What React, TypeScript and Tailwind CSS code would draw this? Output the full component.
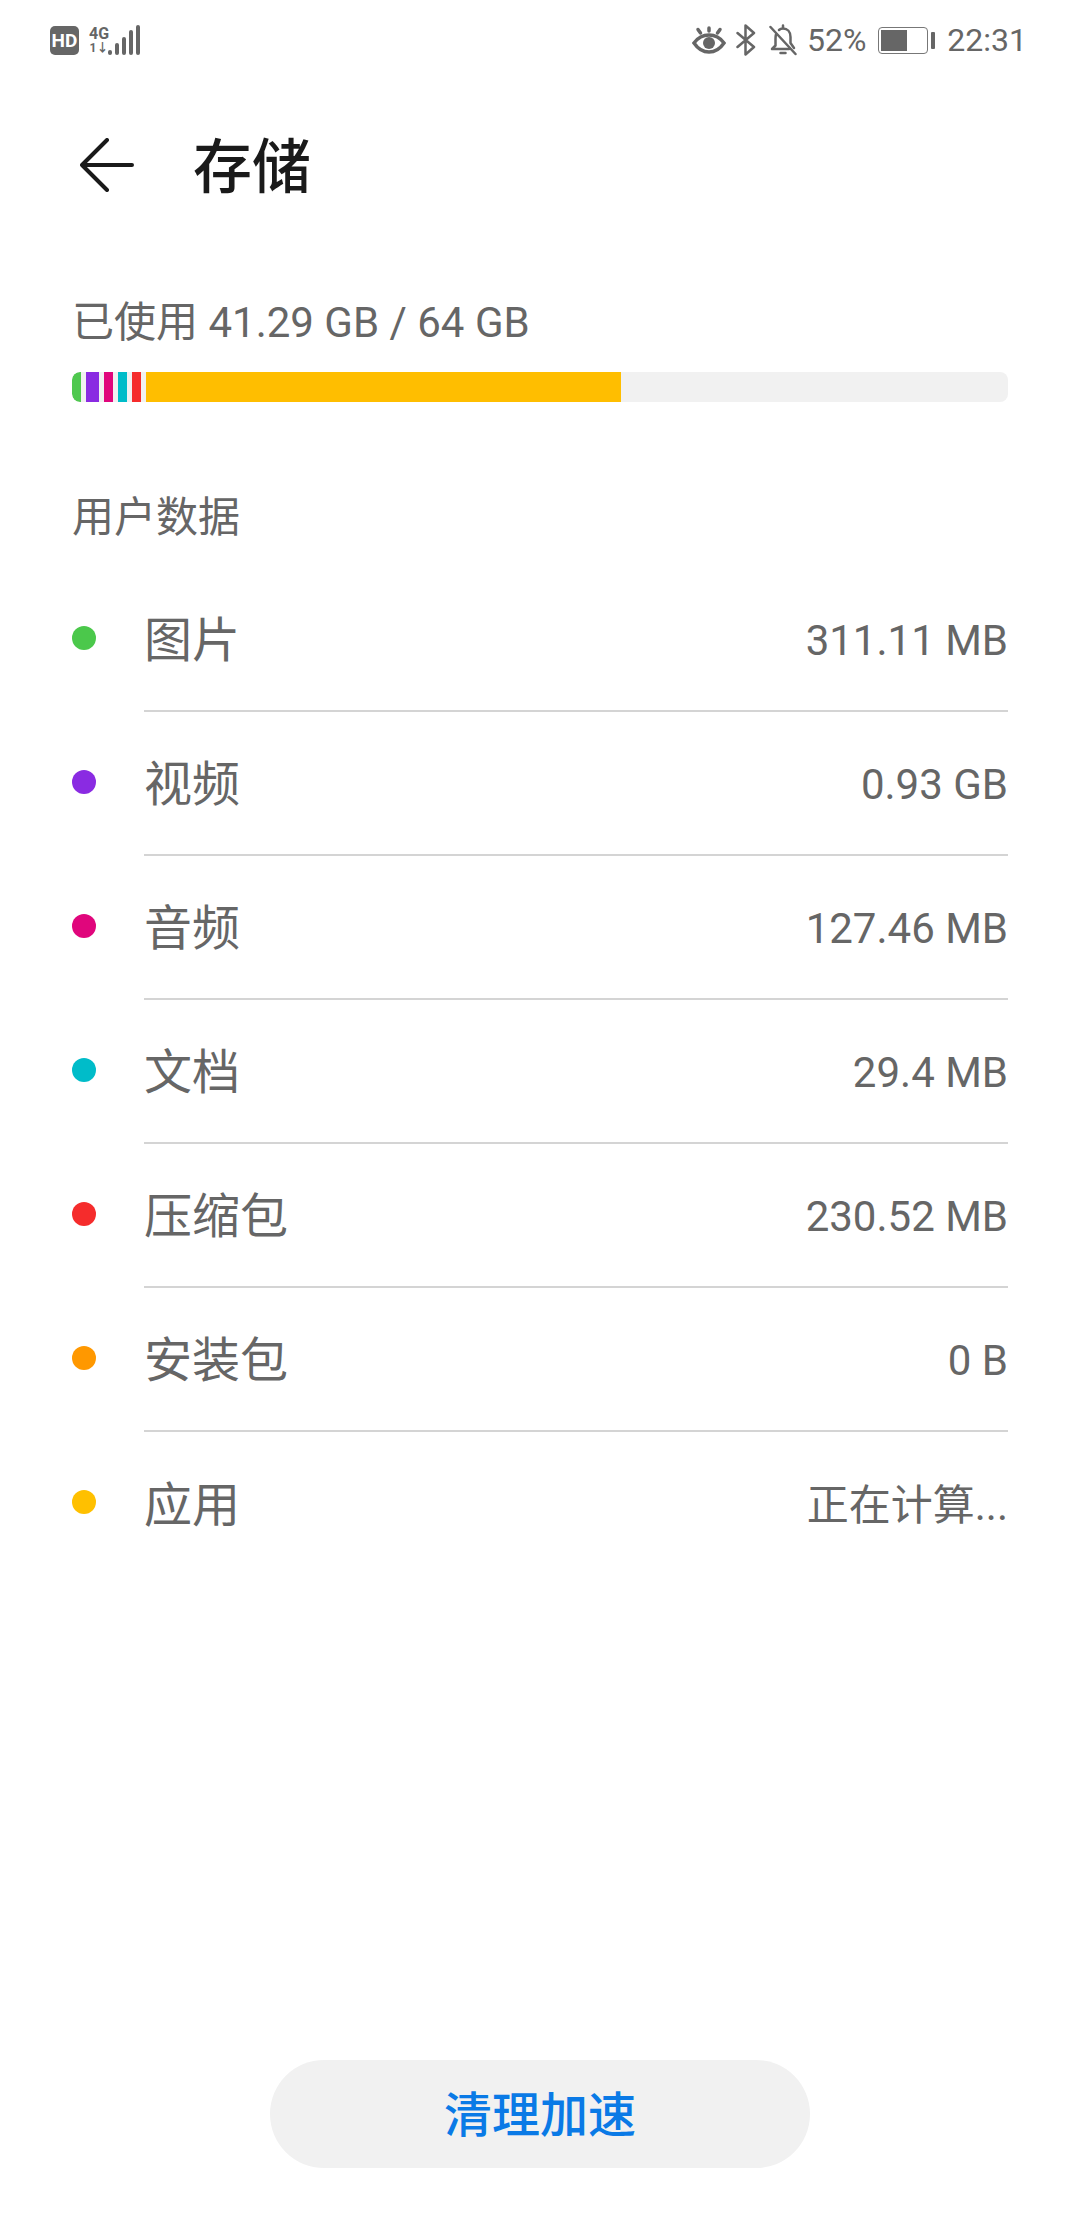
import React from 'react';

const segments = [
  { className: 'w-[9px] bg-[#4fc84f] rounded-l-[8px]' },
  { className: 'w-[13px] bg-[#8a2be2]' },
  { className: 'w-[9px] bg-[#e0067c]' },
  { className: 'w-[9px] bg-[#00bcc9]' },
  { className: 'w-[9px] bg-[#f52c2c]' },
];

const rows = [
  { dot: 'bg-[#4bc84b]', name: '图片', value: '311.11 MB' },
  { dot: 'bg-[#8a2be2]', name: '视频', value: '0.93 GB' },
  { dot: 'bg-[#e0067c]', name: '音频', value: '127.46 MB' },
  { dot: 'bg-[#00bcc9]', name: '文档', value: '29.4 MB' },
  { dot: 'bg-[#f52c2c]', name: '压缩包', value: '230.52 MB' },
  { dot: 'bg-[#ff9800]', name: '安装包', value: '0 B' },
  { dot: 'bg-[#ffc000]', name: '应用', value: '正在计算...' },
];

const StatusLeft = () => (
  <div className="flex items-center gap-[11px]">
    <div className="flex h-[29px] w-[29px] items-center justify-center rounded-[5px] bg-[#666666] text-[19px] font-bold leading-none text-white">
      HD
    </div>
    <div className="flex items-end">
      <div className="flex w-[18px] flex-col items-center text-[#666666]">
        <span className="text-[16px] font-bold leading-[17px]">4G</span>
        <span className="text-[12px] font-bold leading-[13px]">1↓</span>
      </div>
      <div className="flex items-end gap-[3px]">
        <span className="h-[5px] w-[4px] rounded-full bg-[#666666]" />
        <span className="h-[12px] w-[4px] rounded-full bg-[#666666]" />
        <span className="h-[18px] w-[4px] rounded-full bg-[#666666]" />
        <span className="h-[25px] w-[4px] rounded-full bg-[#666666]" />
        <span className="h-[30px] w-[4px] rounded-full bg-[#666666]" />
      </div>
    </div>
  </div>
);

const EyeIcon = () => (
  <svg width="34" height="28" viewBox="0 0 34 28" fill="none" stroke="#666666" strokeWidth="3.500" strokeLinecap="round">
    <path d="M2 17C6 11.500 11 9 17 9S28 11.500 32 17C28 23 23 26 17 26S6 23 2 17Z" />
    <circle cx="17" cy="17" r="6" fill="#666666" stroke="none" />
    <path d="M17 2V5M6 3.500L8.500 7M28 3.500L25.500 7" />
  </svg>
);

const BluetoothIcon = () => (
  <svg width="20" height="32" viewBox="0 0 20 32" fill="none" stroke="#666666" strokeWidth="2.500" strokeLinecap="round" strokeLinejoin="round">
    <path d="M1.500 9L18 23L9.500 30.500V1.500L18 9L1.500 23" />
  </svg>
);

const BellOffIcon = () => (
  <svg width="28" height="32" viewBox="0 0 28 32" fill="none" stroke="#666666" strokeWidth="2.500" strokeLinecap="round" strokeLinejoin="round">
    <path d="M7 10.500C6.500 12 6.500 13 6.500 15V21.500L3 25H20" />
    <path d="M10 6C11 5 12.500 4.500 14 4.500C18.500 4.500 21.500 8 21.500 13V19L25 24" />
    <path d="M14 1.500V4M11.500 29H16.500" />
    <path d="M1.500 3L26.500 30" />
  </svg>
);

const BatteryIcon = () => (
  <div className="flex items-center gap-[3px]">
    <div className="h-[27px] w-[50px] rounded-[4px] border-[1.500px] border-[#777777] p-[2px]">
      <div className="h-full w-[26px] bg-[#666666]" />
    </div>
    <div className="h-[17px] w-[4px] rounded-[1px] bg-[#666666]" />
  </div>
);

const BackArrow = () => (
  <svg width="54" height="54" viewBox="0 0 54 54" fill="none" stroke="#1a1a1a" strokeWidth="4" strokeLinecap="round" strokeLinejoin="round">
    <path d="M52 27H2M27 2L2 27L27 52" />
  </svg>
);

export default function App() {
  return (
    <div className="flex h-[2240px] w-[1080px] flex-col bg-white font-['Roboto','Noto_Sans_CJK_SC',sans-serif]">
      <div className="flex h-[80px] items-center justify-between pl-[50px] pr-[53px]">
        <StatusLeft />
        <div className="flex items-center text-[32px] leading-none text-[#666666]">
          <EyeIcon />
          <span className="ml-[10px]"><BluetoothIcon /></span>
          <span className="ml-[13px]"><BellOffIcon /></span>
          <span className="ml-[10px]">52%</span>
          <span className="ml-[12px]"><BatteryIcon /></span>
          <span className="ml-[12px]">22:31</span>
        </div>
      </div>

      <div className="flex h-[174px] items-center pl-[80px]">
        <span className="mb-[5px]"><BackArrow /></span>
        <h1 className="ml-[59px] text-[59px] font-medium leading-none text-[#1a1a1a]">存储</h1>
      </div>

      <div className="mt-[41px] px-[72px]">
        <p className="text-[42px] leading-[56px] text-[#666666]">已使用 41.29 GB / 64 GB</p>
        <div className="mt-[21px] flex h-[30px] gap-[5px] overflow-hidden rounded-[8px] bg-[#f1f1f1]">
          {segments.map((s, i) => (
            <div key={i} className={s.className} />
          ))}
          <div className="w-[475px] bg-[#ffbe00]" />
        </div>
        <p className="mt-[88px] text-[42px] leading-[56px] text-[#666666]">用户数据</p>
      </div>

      <div className="mt-[22px] px-[72px]">
        {rows.map((row, i) => (
          <div key={row.name} className="flex h-[144px] items-center">
            <span className={`mb-[5px] h-[24px] w-[24px] shrink-0 rounded-full ${row.dot}`} />
            <div
              className={`ml-[48px] flex h-full flex-1 items-center justify-between pt-[3px] ${
                i < rows.length - 1 ? 'border-b-2 border-[#d4d4d4]' : ''
              }`}
            >
              <span className="text-[48px] leading-none text-[#666666]">{row.name}</span>
              <span className="text-[42px] leading-none text-[#666666]">{row.value}</span>
            </div>
          </div>
        ))}
      </div>

      <div className="mt-auto flex justify-center pb-[72px]">
        <button className="h-[108px] w-[540px] rounded-full bg-[#f1f1f1] pt-[4px] text-[48px] font-medium leading-none text-[#0a7ae6]">
          清理加速
        </button>
      </div>
    </div>
  );
}
